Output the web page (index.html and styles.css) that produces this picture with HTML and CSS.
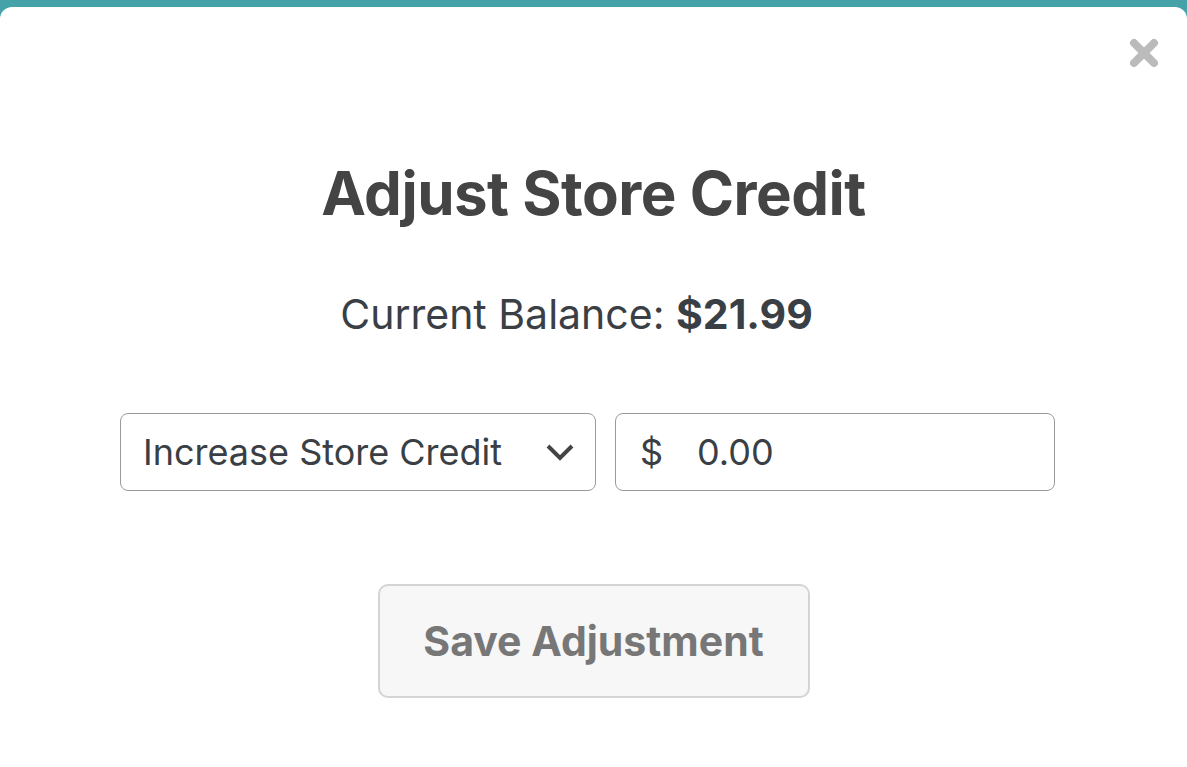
FILE: index.html
```html
<!DOCTYPE html>
<html lang="en">
<head>
  <meta charset="UTF-8" />
  <meta name="viewport" content="width=device-width, initial-scale=1.0"/>
  <title>Adjust Store Credit</title>
  <link rel="stylesheet" href="styles.css">
</head>
<body>
  <div class="modal">
    <button class="close" aria-label="Close">
      <svg viewBox="0 0 30 30" width="30" height="30">
        <path d="M5 5 L25 25 M25 5 L5 25" stroke="#bbbbbb" stroke-width="8" stroke-linecap="round"/>
      </svg>
    </button>

    <h1>Adjust Store Credit</h1>
    <p class="balance">Current Balance: <strong>$21.99</strong></p>

    <div class="fields">
      <div class="select">
        <span>Increase Store Credit</span>
        <svg viewBox="0 0 30 18" width="30" height="18">
          <path d="M3 3 L15 15 L27 3" fill="none" stroke="#444" stroke-width="4"/>
        </svg>
      </div>
      <div class="amount">
        <span class="currency">$</span>
        <span class="value">0.00</span>
      </div>
    </div>

    <button class="save">Save Adjustment</button>
  </div>
</body>
</html>
```

FILE: styles.css
```css
body {
  margin: 0;
  background-color: #44a2a8;
  font-family: 'Inter', 'Helvetica Neue', sans-serif;
  color: #3a3f45;
  height: 767px;
  overflow: hidden;
}

.modal {
  position: relative;
  margin-top: 7px;
  background-color: #fff;
  border-radius: 12px 12px 0 0;
  height: 760px;
  display: flex;
  flex-direction: column;
  align-items: center;
  padding-top: 150px;
  box-sizing: border-box;
}

.close {
  position: absolute;
  top: 31px;
  right: 28px;
  background: none;
  border: none;
  padding: 0;
  cursor: pointer;
}

.close svg {
  display: block;
}

h1 {
  margin: 0;
  font-size: 60px;
  font-weight: 700;
  color: #444;
  letter-spacing: -0.5px;
}

.balance {
  margin: 60px 34px 0 0;
  font-size: 41px;
}

.balance strong {
  font-weight: 700;
}

.fields {
  display: flex;
  gap: 19px;
  margin: 74px 12px 0 0;
}

.select,
.amount {
  height: 78px;
  box-sizing: border-box;
  border: 1.5px solid #9a9a9a;
  border-radius: 8px;
  display: flex;
  align-items: center;
  font-size: 36px;
}

.select {
  width: 476px;
  padding: 0 20px 0 22px;
  justify-content: space-between;
}

.amount {
  width: 440px;
  padding: 0 24px;
}

.currency {
  width: 57px;
}

.save {
  margin-top: 93px;
  width: 432px;
  height: 114px;
  background-color: #f7f7f7;
  border: 2px solid #d4d4d4;
  border-radius: 10px;
  font-family: inherit;
  font-size: 41px;
  font-weight: 700;
  color: #777;
  cursor: pointer;
}
```
